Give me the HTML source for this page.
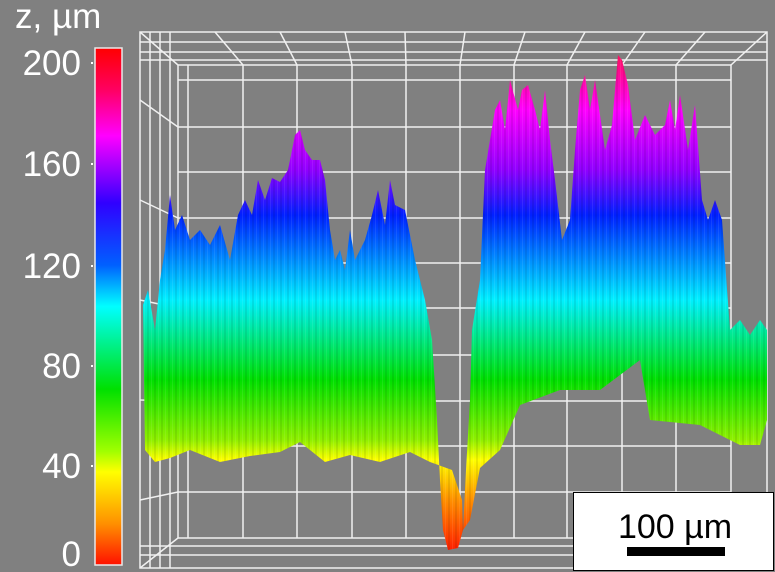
<!DOCTYPE html>
<html><head><meta charset="utf-8"><style>
html,body{margin:0;padding:0;background:#808080;}
body{width:775px;height:572px;overflow:hidden;position:relative;font-family:"Liberation Sans",Arial,sans-serif;}
</style></head><body>
<svg width="775" height="572" viewBox="0 0 775 572" style="position:absolute;left:0;top:0">
<defs>
<linearGradient id="cb" x1="0" y1="48" x2="0" y2="565" gradientUnits="userSpaceOnUse">
<stop offset="0" stop-color="#ff0000"/>
<stop offset="0.08" stop-color="#ff0060"/>
<stop offset="0.17" stop-color="#ff00ff"/>
<stop offset="0.3" stop-color="#3000ff"/>
<stop offset="0.42" stop-color="#0060ff"/>
<stop offset="0.5" stop-color="#00ffff"/>
<stop offset="0.66" stop-color="#00e000"/>
<stop offset="0.78" stop-color="#a0ff00"/>
<stop offset="0.82" stop-color="#ffff00"/>
<stop offset="0.92" stop-color="#ff9000"/>
<stop offset="1" stop-color="#ff1000"/>
</linearGradient>
<linearGradient id="sf" x1="0" y1="50" x2="0" y2="550" gradientUnits="userSpaceOnUse">
<stop offset="0" stop-color="#ff1050"/>
<stop offset="0.12" stop-color="#ff00ff"/>
<stop offset="0.24" stop-color="#9000ff"/>
<stop offset="0.33" stop-color="#0020ff"/>
<stop offset="0.5" stop-color="#00f0ff"/>
<stop offset="0.66" stop-color="#00e000"/>
<stop offset="0.78" stop-color="#90f000"/>
<stop offset="0.82" stop-color="#ffff00"/>
<stop offset="0.9" stop-color="#ff9000"/>
<stop offset="1" stop-color="#ff2000"/>
</linearGradient>
<pattern id="st" width="7" height="40" patternUnits="userSpaceOnUse">
<rect x="0" y="0" width="2" height="40" fill="#000" opacity="0.08"/>
<rect x="4" y="0" width="1" height="40" fill="#fff" opacity="0.08"/>
</pattern>
</defs>
<g stroke="#f0f0f0" stroke-width="1.5" fill="none">
<rect x="140" y="32" width="627" height="536"/>
<rect x="178" y="65" width="553" height="473"/>
<line x1="140" y1="32" x2="178" y2="65"/><line x1="767" y1="32" x2="731" y2="65"/>
<line x1="140" y1="568" x2="178" y2="538"/><line x1="767" y1="568" x2="731" y2="538"/>
<path d="M140 42H767M140 52H767M140 60H767"/>
<path d="M150 32V568M160 32V568M170 32V568"/>
<path d="M188 65V538M243 65V538M297 65V538M352 65V538M406 65V538M460 65V538M514 65V538M567 65V538M622 65V538M676 65V538"/>
<path d="M178 80H731M178 127H731M178 172H731M178 218H731M178 263H731M178 308H731M178 355H731M178 401H731M178 446H731M178 492H731"/>
<path d="M243 65L215 32M297 65L280 32M352 65L345 32M406 65L405 32M460 65L465 32M514 65L525 32M567 65L585 32M622 65L645 32M676 65L705 32"/>
<path d="M178 127L140 100M178 218L140 200M178 308L140 300M178 401L140 400M178 492L140 500"/>
<path d="M140 555H767M140 546H767"/>
</g>
<g>
<path fill="url(#sf)" d="M143 305L148 290L155 330L160 280L165 250L170 195L175 230L182 215L190 240L200 230L210 245L220 225L230 260L238 215L245 200L252 215L258 180L265 200L272 178L280 182L288 170L295 135L300 130L305 150L312 160L320 160L325 180L330 230L335 260L340 250L345 270L350 230L355 260L365 240L372 215L378 190L385 225L390 180L395 205L405 210L415 260L425 300L432 340L437 420L440 480L443 530L448 550L458 548L463 530L462 500L452 470L430 462L410 452L380 462L350 455L325 462L300 442L280 452L250 456L220 462L190 450L170 458L155 462L145 450Z"/>
<path fill="url(#st)" d="M143 305L148 290L155 330L160 280L165 250L170 195L175 230L182 215L190 240L200 230L210 245L220 225L230 260L238 215L245 200L252 215L258 180L265 200L272 178L280 182L288 170L295 135L300 130L305 150L312 160L320 160L325 180L330 230L335 260L340 250L345 270L350 230L355 260L365 240L372 215L378 190L385 225L390 180L395 205L405 210L415 260L425 300L432 340L437 420L440 480L443 530L448 550L458 548L463 530L462 500L452 470L430 462L410 452L380 462L350 455L325 462L300 442L280 452L250 456L220 462L190 450L170 458L155 462L145 450Z"/>
<path fill="url(#sf)" d="M463 530L466 470L470 400L472 330L480 280L485 170L490 140L495 110L500 100L505 130L510 80L518 110L522 90L528 85L535 110L540 130L545 90L550 140L555 180L562 240L570 220L575 150L580 90L585 75L590 110L595 80L605 150L612 125L618 55L622 60L628 85L635 140L645 115L655 135L665 125L670 100L675 130L680 95L688 150L695 105L702 200L708 220L715 200L722 220L730 330L740 320L750 335L760 320L767 330L767 420L760 445L740 445L700 425L650 420L640 360L600 390L560 390L520 405L500 450L480 468L470 520Z"/>
<path fill="url(#st)" d="M463 530L466 470L470 400L472 330L480 280L485 170L490 140L495 110L500 100L505 130L510 80L518 110L522 90L528 85L535 110L540 130L545 90L550 140L555 180L562 240L570 220L575 150L580 90L585 75L590 110L595 80L605 150L612 125L618 55L622 60L628 85L635 140L645 115L655 135L665 125L670 100L675 130L680 95L688 150L695 105L702 200L708 220L715 200L722 220L730 330L740 320L750 335L760 320L767 330L767 420L760 445L740 445L700 425L650 420L640 360L600 390L560 390L520 405L500 450L480 468L470 520Z"/>
</g>
<rect x="95" y="48" width="27" height="517" fill="url(#cb)" stroke="#e8e8e8" stroke-width="1.5"/>
<g fill="#fff">
<rect x="91" y="62" width="2" height="2"/><rect x="91" y="163" width="2" height="2"/><rect x="91" y="265" width="2" height="2"/><rect x="91" y="365" width="2" height="2"/><rect x="91" y="465" width="2" height="2"/>
</g>
<g fill="#fff" font-family="Liberation Sans, Arial, sans-serif" font-size="35">
<text x="15" y="28">z, µm</text>
<g text-anchor="end">
<text x="81" y="75">200</text>
<text x="81" y="176">160</text>
<text x="81" y="278">120</text>
<text x="81" y="378">80</text>
<text x="81" y="478">40</text>
<text x="81" y="566">0</text>
</g>
</g>
<rect x="573.5" y="492.5" width="200" height="78" fill="#fff" stroke="#000" stroke-width="1"/>
<text x="675" y="538" font-family="Liberation Sans, Arial, sans-serif" font-size="34" text-anchor="middle" fill="#000">100 µm</text>
<rect x="627" y="547" width="98" height="9" fill="#000"/>
</svg>
</body></html>
